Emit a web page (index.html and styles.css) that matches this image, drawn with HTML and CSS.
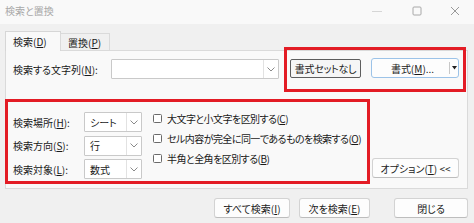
FILE: index.html
```html
<!DOCTYPE html>
<html lang="ja">
<head>
<meta charset="utf-8">
<title>検索と置換</title>
<link rel="stylesheet" href="styles.css">
</head>
<body>
<div class="dialog">
  <div class="titlebar">
    <span class="title">検索と置換</span>
    <div class="controls">
      <span class="ctl ctl-min"><svg width="10" height="10" viewBox="0 0 10 10"><line x1="0" y1="5.5" x2="10" y2="5.5"/></svg></span>
      <span class="ctl ctl-max"><svg width="10" height="10" viewBox="0 0 10 10"><rect x="1" y="1" width="8" height="8" rx="1"/></svg></span>
      <span class="ctl ctl-close"><svg width="10" height="10" viewBox="0 0 10 10"><path d="M1 1 L9 9 M9 1 L1 9"/></svg></span>
    </div>
  </div>

  <div class="tabs">
    <div class="tab tab-active">検索(<u>D</u>)</div>
    <div class="tab">置換(<u>P</u>)</div>
  </div>

  <div class="panel">
    <div class="row-find">
      <span class="lbl-find">検索する文字列(<u>N</u>):</span>
      <div class="combo combo-wide">
        <span class="combo-val"></span>
        <span class="combo-arrow"><svg width="8" height="5" viewBox="0 0 8 5"><polyline points="0.5,0.5 4,4 7.5,0.5"/></svg></span>
      </div>
      <button class="btn btn-clear">書式セットなし</button>
      <div class="split">
        <span class="split-main">書式(<u>M</u>)...</span>
        <span class="split-drop"><svg width="5" height="4" viewBox="0 0 5 4"><polygon points="0,0 5,0 2.5,3.5"/></svg></span>
      </div>
    </div>

    <div class="opts">
      <div class="selects">
        <span class="lbl">検索場所(<u>H</u>):</span>
        <div class="combo combo-sel">
          <span class="combo-val">シート</span>
          <span class="combo-arrow"><svg width="8" height="5" viewBox="0 0 8 5"><polyline points="0.5,0.5 4,4 7.5,0.5"/></svg></span>
        </div>
        <span class="lbl">検索方向(<u>S</u>):</span>
        <div class="combo combo-sel">
          <span class="combo-val">行</span>
          <span class="combo-arrow"><svg width="8" height="5" viewBox="0 0 8 5"><polyline points="0.5,0.5 4,4 7.5,0.5"/></svg></span>
        </div>
        <span class="lbl">検索対象(<u>L</u>):</span>
        <div class="combo combo-sel">
          <span class="combo-val">数式</span>
          <span class="combo-arrow"><svg width="8" height="5" viewBox="0 0 8 5"><polyline points="0.5,0.5 4,4 7.5,0.5"/></svg></span>
        </div>
      </div>

      <div class="checks">
        <div class="check"><span class="box"></span><span>大文字と小文字を区別する(<u>C</u>)</span></div>
        <div class="check"><span class="box"></span><span>セル内容が完全に同一であるものを検索する(<u>O</u>)</span></div>
        <div class="check"><span class="box"></span><span>半角と全角を区別する(<u>B</u>)</span></div>
      </div>

      <button class="btn btn-opt">オプション(<u>T</u>) &lt;&lt;</button>
    </div>
  </div>

  <div class="footer">
    <button class="btn btn-all">すべて検索(<u>I</u>)</button>
    <button class="btn btn-next">次を検索(<u>E</u>)</button>
    <button class="btn btn-close">閉じる</button>
  </div>

  <div class="mark mark-format"></div>
  <div class="mark mark-options"></div>
</div>
</body>
</html>
```

FILE: styles.css
```css
* { box-sizing: border-box; }

html, body {
  margin: 0;
  padding: 0;
}

body {
  width: 474px;
  height: 223px;
  overflow: hidden;
  background: #f0f0f0;
  font-family: "Noto Sans CJK JP", "Noto Sans", sans-serif;
  font-feature-settings: "palt";
  font-size: 10px;
  color: #1a1a1a;
}

u { text-decoration: underline; text-underline-offset: 1px; }

.dialog {
  position: relative;
  width: 474px;
  height: 223px;
}

.titlebar {
  height: 24px;
  background: #f9f9f9;
  display: flex;
  align-items: center;
  justify-content: space-between;
  padding-left: 5px;
}

.title {
  color: #a8a8a8;
  font-size: 10px;
  line-height: 1;
  margin-top: -2px;
}

.controls {
  display: flex;
  align-items: center;
  margin-top: -2px;
}

.ctl {
  display: flex;
  align-items: center;
  justify-content: center;
}

.ctl svg { display: block; fill: none; stroke-width: 1; }
.ctl-min { width: 10px; margin-right: 30px; }
.ctl-min svg { stroke: #d6d6d6; }
.ctl-max { width: 10px; margin-right: 28px; }
.ctl-max svg { stroke: #a8a8a8; }
.ctl-close { width: 10px; margin-right: 14px; }
.ctl-close svg { stroke: #9a9a9a; }

.tabs {
  display: flex;
  align-items: flex-end;
  height: 19px;
  margin-top: 7px;
  margin-left: 5px;
  position: relative;
  z-index: 1;
}

.tab {
  height: 17px;
  padding: 0 7px;
  display: flex;
  align-items: center;
  border: 1px solid #dadada;
  border-bottom: none;
  background: #f0f0f0;
  width: 50px;
  margin-left: -1px;
  white-space: nowrap;
}

.tab-active {
  height: 20px;
  width: 56px;
  margin-left: 0;
  margin-bottom: -1px;
  background: #f9f9f9;
  border-color: #d6d6d6;
}

.panel {
  margin-left: 5px;
  width: 463px;
  height: 139px;
  border: 1px solid #dadada;
  background: #f9f9f9;
  padding: 8px 8px 0 7px;
}

.row-find {
  display: flex;
  align-items: center;
  height: 20px;
}

.lbl-find { width: 98px; white-space: nowrap; }

.combo {
  display: flex;
  align-items: stretch;
  background: #ffffff;
  border: 1px solid #c9c9c9;
  border-radius: 1px;
}

.combo-val {
  flex: 1;
  display: flex;
  align-items: center;
  padding-left: 5px;
}

.combo-arrow {
  width: 15px;
  display: flex;
  align-items: center;
  justify-content: center;
  border-left: 1px solid #e2e2e2;
}

.combo-arrow svg { fill: none; stroke: #8a8a8a; stroke-width: 1; display: block; }

.combo-wide {
  width: 168px;
  height: 20px;
  flex-shrink: 0;
}

.btn {
  font: inherit;
  color: inherit;
  height: 20px;
  padding: 0;
  background: #fdfdfd;
  border: 1px solid #d3d3d3;
  border-bottom-color: #bdbdbd;
  border-radius: 3px;
  display: flex;
  align-items: center;
  justify-content: center;
  white-space: nowrap;
  flex-shrink: 0;
}

.btn-clear {
  width: 71px;
  margin-left: 11px;
  height: 19px;
  margin-top: -2px;
  border: 1px solid #5e5e5e;
  border-radius: 2px;
  background: #f6f6f6;
  letter-spacing: -0.3px;
}

.split {
  width: 88px;
  height: 20px;
  margin-left: 10px;
  margin-top: -2px;
  display: flex;
  flex-shrink: 0;
  background: #fdfdfd;
  border: 1px solid #9cc3e8;
  border-radius: 3px;
}

.split-main {
  flex: 1;
  display: flex;
  align-items: center;
  justify-content: center;
  padding-left: 4px;
  white-space: nowrap;
}

.split-drop {
  width: 9px;
  border-left: 1px solid #c8c8c8;
  margin: 3px 0;
  display: flex;
  align-items: center;
  justify-content: center;
}

.split-drop svg { fill: #202020; display: block; }

.opts {
  display: flex;
  align-items: flex-start;
  margin-top: 33px;
  height: 67px;
}

.selects {
  display: grid;
  grid-template-columns: 71px 58px;
  grid-auto-rows: 20px;
  row-gap: 3.5px;
  flex-shrink: 0;
}

.lbl {
  display: flex;
  align-items: center;
  white-space: nowrap;
}

.combo-sel { height: 20px; }

.checks {
  width: 206px;
  flex-shrink: 0;
  margin-left: 11px;
  margin-top: -4px;
  display: flex;
  flex-direction: column;
}

.check {
  height: 20px;
  display: flex;
  align-items: center;
  white-space: nowrap;
  letter-spacing: -0.55px;
}

.box {
  width: 9px;
  height: 9px;
  flex-shrink: 0;
  border: 1px solid #6a6a6a;
  border-radius: 1.5px;
  background: #ffffff;
  margin-right: 5px;
}

.btn-opt {
  width: 87px;
  margin-left: auto;
  margin-top: 46px;
}

.footer {
  display: flex;
  justify-content: flex-end;
  margin-top: 9px;
  padding-right: 6px;
}

.footer .btn { height: 20px; }
.btn-all { width: 76px; }
.btn-next { width: 71px; margin-left: 9px; }
.btn-close { width: 74px; margin-left: 24px; }

.mark {
  position: absolute;
  border: 3px solid #e31c25;
  pointer-events: none;
  z-index: 5;
}

.mark-format {
  left: 284px;
  top: 47px;
  width: 182px;
  height: 45px;
}

.mark-options {
  left: 5px;
  top: 99px;
  width: 365px;
  height: 85px;
}
```
